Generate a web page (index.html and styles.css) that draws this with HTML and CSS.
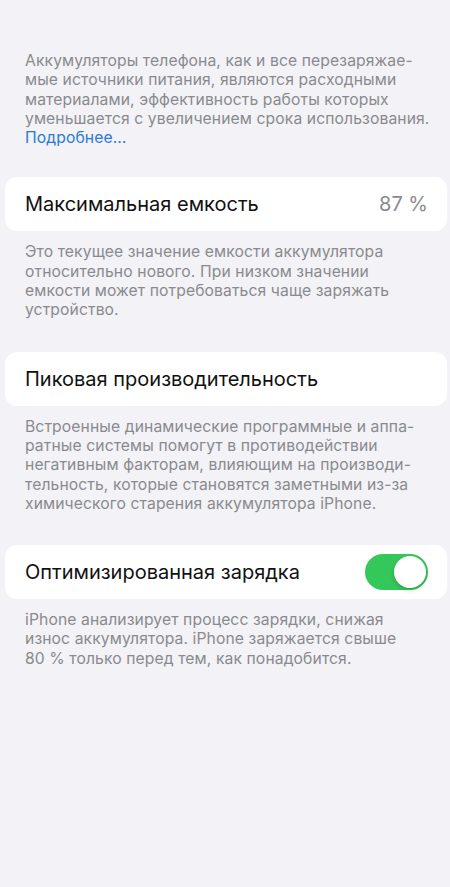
FILE: index.html
```html
<!DOCTYPE html>
<html lang="ru">
<head>
<meta charset="utf-8">
<link rel="stylesheet" href="styles.css">
</head>
<body>
<div class="page">
  <p class="note intro">Аккумуляторы телефона, как и все перезаряжае-<br>мые источники питания, являются расходными<br>материалами, эффективность работы которых<br>уменьшается с увеличением срока использования.<br><span class="link">Подробнее…</span></p>

  <div class="card">
    <span class="title">Максимальная емкость</span>
    <span class="value">87 %</span>
  </div>
  <p class="note">Это текущее значение емкости аккумулятора<br>относительно нового. При низком значении<br>емкости может потребоваться чаще заряжать<br>устройство.</p>

  <div class="card">
    <span class="title">Пиковая производительность</span>
  </div>
  <p class="note">Встроенные динамические программные и аппа-<br>ратные системы помогут в противодействии<br>негативным факторам, влияющим на производи-<br>тельность, которые становятся заметными из-за<br>химического старения аккумулятора iPhone.</p>

  <div class="card">
    <span class="title">Оптимизированная зарядка</span>
    <span class="toggle"><span class="knob"></span></span>
  </div>
  <p class="note">iPhone анализирует процесс зарядки, снижая<br>износ аккумулятора. iPhone заряжается свыше<br>80 % только перед тем, как понадобится.</p>
</div>
</body>
</html>
```

FILE: styles.css
```css
html, body {
  margin: 0;
  padding: 0;
  background: #f2f2f7;
}
body {
  font-family: Inter, "Noto Sans", "Liberation Sans", sans-serif;
  -webkit-font-smoothing: antialiased;
}
.page {
  padding: 51px 3px 0 5px;
  height: 887px;
  box-sizing: border-box;
}
.note {
  margin: 0;
  padding: 0 0 0 20px;
  font-size: 15.7px;
  line-height: 19.3px;
  color: #8a8a8e;
  letter-spacing: 0.1px;
  white-space: nowrap;
}
.intro {
  margin-bottom: 30px;
}
.link {
  color: #2a7ad2;
}
.card {
  background: #ffffff;
  border-radius: 12px;
  height: 54px;
  display: flex;
  align-items: center;
  justify-content: space-between;
  padding: 0 19px 0 20px;
  margin-bottom: 11px;
}
.card + .note {
  margin-bottom: 32px;
}
.title {
  font-size: 20px;
  color: #111111;
}
.value {
  font-size: 20px;
  color: #8a8a8e;
}
.toggle {
  width: 63px;
  height: 36px;
  border-radius: 18px;
  background: #34c759;
  display: flex;
  align-items: center;
  justify-content: flex-end;
  padding: 0 2px;
  box-sizing: border-box;
}
.knob {
  width: 32px;
  height: 32px;
  border-radius: 50%;
  background: #ffffff;
  box-shadow: 0 2px 4px rgba(0,0,0,0.18);
}
```
